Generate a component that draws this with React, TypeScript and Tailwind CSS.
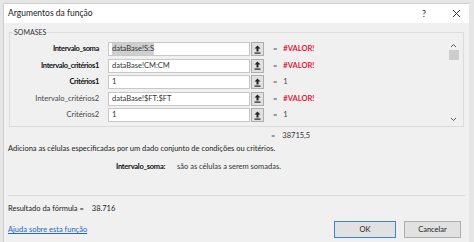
const rows = [
  { label: "Intervalo_soma", bold: true, value: "dataBase!S:S", result: "#VALOR!", err: true, selected: true },
  { label: "Intervalo_critérios1", bold: true, value: "dataBase!CM:CM", result: "#VALOR!", err: true },
  { label: "Critérios1", bold: true, value: "1", result: "1", err: false },
  { label: "Intervalo_critérios2", bold: false, value: "dataBase!$FT:$FT", result: "#VALOR!", err: true },
  { label: "Critérios2", bold: false, value: "1", result: "1", err: false },
];

function RefButton() {
  return (
    <div className="flex h-[14px] w-[13px] items-center justify-center border border-[#adadad] bg-[#e1e1e1]">
      <svg width="7" height="9" viewBox="0 0 7 9">
        <path d="M3.5 0.5 L6.5 3.5 H4.5 V6.5 H2.5 V3.5 H0.5 Z" fill="#222" />
        <rect x="0.5" y="7.5" width="6" height="1.2" fill="#222" />
      </svg>
    </div>
  );
}

export default function App() {
  return (
    <div
      className="relative h-[242px] w-[474px] overflow-hidden bg-[#e6e6e6] text-[7.5px] text-[#222]"
      style={{ fontFamily: 'Lato, "Open Sans", sans-serif' }}
    >
      <div className="ml-[3px] mt-[3px] flex h-[239px] w-[466px] flex-col border-l border-t border-[#cfcfcf] bg-[#f0f0f0]">
        {/* title bar */}
        <div className="flex h-[19px] items-center bg-white pl-[4px] pr-[8px] text-[8.5px]">
          <span className="flex-1">Argumentos da função</span>
          <span className="mr-[26px] text-[9px]">?</span>
          <svg width="9" height="9" viewBox="0 0 9 9">
            <path d="M1 1 L8 8 M8 1 L1 8" stroke="#333" strokeWidth="1" />
          </svg>
        </div>

        {/* group box */}
        <div className="relative mx-[5px] mt-[9px] h-[95px] border border-[#dcdcdc]">
          <span className="absolute left-[3px] top-[-6px] bg-[#f0f0f0] px-[1px] text-[7px] text-[#333]">SOMASES</span>
          <div className="flex pt-[9px]">
            <div className="flex flex-col gap-[2.5px]">
              {rows.map((r) => (
                <div key={r.label} className="flex h-[14px] items-center">
                  <span className={`w-[89px] text-right ${r.bold ? "font-bold tracking-[-0.35px] text-[#111]" : "text-[#444]"}`}>{r.label}</span>
                  <div className="ml-[9px] flex h-[14px] w-[142px] items-center border border-[#c8c8c8] bg-white pl-[3px] text-[#333]">
                    <span className={r.selected ? "bg-[#cfcfcf]" : ""}>{r.value}</span>
                  </div>
                  <div className="ml-[1px]">
                    <RefButton />
                  </div>
                  <span className="ml-[9px] text-[#555]">=</span>
                  <span className={`ml-[6px] ${r.err ? "font-bold text-[#e0183a]" : "text-[#444]"}`}>{r.result}</span>
                </div>
              ))}
            </div>
            <div className="flex-1" />
            <div className="mr-[4px] flex h-[80px] w-[11px] flex-col items-center">
              <svg width="7" height="5" viewBox="0 0 7 5" className="mt-[1px]">
                <path d="M1 4 L3.5 1.5 L6 4" stroke="#555" fill="none" strokeWidth="1" />
              </svg>
              <div className="mt-[2px] h-[10px] w-[10px] bg-[#cdcdcd]" />
              <div className="flex-1" />
              <svg width="7" height="5" viewBox="0 0 7 5">
                <path d="M1 1 L3.5 3.5 L6 1" stroke="#555" fill="none" strokeWidth="1" />
              </svg>
            </div>
          </div>
        </div>

        <div className="mt-[3px] flex pl-[267px] text-[#333]">
          <span className="text-[#555]">=</span>
          <span className="ml-[7px]">38715,5</span>
        </div>
        <div className="mt-[2px] pl-[4px] text-[#222]">
          Adiciona as células especificadas por um dado conjunto de condições ou critérios.
        </div>
        <div className="mt-[6px] flex pl-[112px]">
          <span className="w-[61px] font-bold tracking-[-0.25px] text-[#111]">Intervalo_soma:</span>
          <span className="text-[#333]">são as células a serem somadas.</span>
        </div>

        <div className="mx-[4px] mt-[23px] border-t border-[#dadada]" />

        <div className="mt-[7px] pl-[4px] text-[#222]">
          Resultado da fórmula = <span className="ml-[6px]">38.716</span>
        </div>

        <div className="mt-[7px] flex items-center pl-[4px] pr-[8px]">
          <span className="flex-1 text-[#2566c2] underline">Ajuda sobre esta função</span>
          <button className="h-[17px] w-[62px] border border-[#3c85d4] bg-[#e1e1e1] text-[7.5px] text-[#222]">OK</button>
          <button className="ml-[8px] h-[17px] w-[57px] border border-[#adadad] bg-[#e1e1e1] text-[7.5px] text-[#222]">Cancelar</button>
        </div>
      </div>
    </div>
  );
}
